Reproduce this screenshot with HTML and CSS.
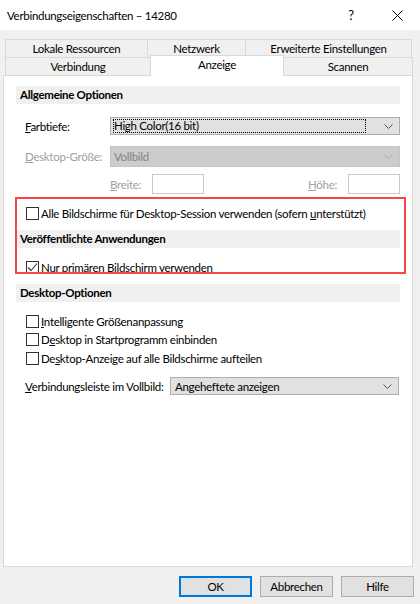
FILE: index.html
```html
<!DOCTYPE html>
<html lang="de">
<head>
<meta charset="utf-8">
<title>Verbindungseigenschaften</title>
<link rel="stylesheet" href="styles.css">
</head>
<body>
<div class="titlebar">
  <span class="title">Verbindungseigenschaften – 14280</span>
  <span class="help">?</span>
  <span class="close"><svg width="11" height="11" viewBox="0 0 11 11"><path d="M0.5 0.5 L10.5 10.5 M10.5 0.5 L0.5 10.5" stroke="#000" stroke-width="1" fill="none"/></svg></span>
</div>

<div class="tabs">
  <div class="tabrow">
    <div class="tab w-lokal">Lokale Ressourcen</div>
    <div class="tab w-netz">Netzwerk</div>
    <div class="tab w-erw">Erweiterte Einstellungen</div>
  </div>
  <div class="tabrow">
    <div class="tab w-verb">Verbindung</div>
    <div class="tab active w-anz">Anzeige</div>
    <div class="tab w-scan">Scannen</div>
  </div>
</div>

<div class="panel">
  <div class="band">Allgemeine Optionen</div>

  <div class="formrow r-farb">
    <span class="lbl"><u>F</u>arbtiefe:</span>
    <div class="select s-farb"><span class="focus">High Color(16 bit)</span><span class="chev"><svg width="9" height="5" viewBox="0 0 9 5"><path d="M0.5 0.5 L4.5 4.5 L8.5 0.5" stroke="#555" fill="none"/></svg></span></div>
  </div>

  <div class="formrow r-size">
    <span class="lbl dis"><u>D</u>esktop-Größe:</span>
    <div class="select disabled s-size"><span class="val">Vollbild</span><span class="chev"><svg width="9" height="5" viewBox="0 0 9 5"><path d="M0.5 0.5 L4.5 4.5 L8.5 0.5" stroke="#aaa" fill="none"/></svg></span></div>
  </div>

  <div class="formrow r-dim">
    <span class="lbl dis l-breite"><u>B</u>reite:</span>
    <span class="input"></span>
    <span class="lbl dis l-hoehe"><u>H</u>öhe:</span>
    <span class="input"></span>
  </div>

  <div class="check r-alle"><span class="box"></span><span>Alle Bildschirme für Desktop-Session verwenden (sofern <u>u</u>nterstützt)</span></div>

  <div class="band b-veroff">Veröffentlichte Anwendungen</div>

  <div class="check r-nur"><span class="box"><svg width="11" height="11" viewBox="0 0 11 11"><path d="M1 5.5 L4 8.5 L10 1.5" stroke="#333" stroke-width="1.1" fill="none"/></svg></span><span><u>N</u>ur primären Bildschirm verwenden</span></div>

  <div class="band b-desk">Desktop-Optionen</div>

  <div class="check r-int"><span class="box"></span><span><u>I</u>ntelligente Größenanpassung</span></div>
  <div class="check r-start"><span class="box"></span><span>D<u>e</u>sktop in Startprogramm einbinden</span></div>
  <div class="check r-auf"><span class="box"></span><span>De<u>s</u>ktop-Anzeige auf alle Bildschirme aufteilen</span></div>

  <div class="formrow r-leiste">
    <span class="lbl"><u>V</u>erbindungsleiste im Vollbild:</span>
    <div class="select s-leiste"><span class="val">Angeheftete anzeigen</span><span class="chev"><svg width="9" height="5" viewBox="0 0 9 5"><path d="M0.5 0.5 L4.5 4.5 L8.5 0.5" stroke="#555" fill="none"/></svg></span></div>
  </div>

  <div class="highlight"></div>
</div>

<div class="buttons">
  <div class="btn default">OK</div>
  <div class="btn">Abbrechen</div>
  <div class="btn">Hilfe</div>
</div>
</body>
</html>
```

FILE: styles.css
```css
* { box-sizing: border-box; }
html, body { margin: 0; padding: 0; }
body {
  width: 420px;
  height: 604px;
  background: #f0f0f0;
  font-family: Lato, "Noto Sans", sans-serif;
  font-size: 11.5px;
  letter-spacing: -0.3px;
  color: #000;
  overflow: hidden;
  white-space: nowrap;
}
u { text-decoration: underline; text-underline-offset: 1px; }

.titlebar {
  height: 30px;
  background: #fff;
  display: flex;
  align-items: center;
  padding-left: 7px;
}
.title { font-size: 11.5px; flex: 1; }
.help { width: 10px; text-align: center; margin-right: 36px; font-size: 13px; }
.close { width: 11px; height: 11px; margin-right: 17px; display: flex; }

.tabs { margin-top: 9px; padding-left: 5px; }
.tabrow { display: flex; height: 18px; }
.tab {
  height: 18px;
  border: 1px solid #d9d9d9;
  border-bottom: none;
  background: #f0f0f0;
  text-align: center;
  line-height: 17px;
  margin-left: -1px;
}
.tab:first-child { margin-left: 0; }
.w-lokal { width: 143px; }
.w-netz { width: 99px; }
.w-erw { width: 167px; }
.w-verb { width: 146px; }
.w-anz { width: 134px; }
.w-scan { width: 130px; }
.tabrow + .tabrow .tab { line-height: 18px; }
.tab.active {
  background: #fff;
  height: 21px;
  margin-top: -2px;
  line-height: 17px;
  position: relative;
  z-index: 1;
}

.panel {
  position: relative;
  margin-left: 3px;
  width: 410px;
  height: 492px;
  background: #fff;
  border: 1px solid #d9d9d9;
  padding: 10px 12px 0 12px;
}

.band {
  height: 18px;
  background: #f0f0f0;
  font-weight: bold;
  line-height: 18px;
  padding-left: 4px;
}

.formrow { display: flex; align-items: center; padding-left: 9px; }
.lbl { display: block; }
.lbl.dis { color: #a0a0a0; }
.r-farb { margin-top: 13px; height: 18px; }
.r-size { margin-top: 11px; height: 21px; }
.r-farb .lbl, .r-size .lbl { width: 85px; }

.select {
  height: 100%;
  flex: 1;
  background: #e1e1e1;
  border: 1px solid #adadad;
  display: flex;
  align-items: center;
  padding-left: 2px;
  position: relative;
}
.select .focus {
  flex: 1;
  height: 14px;
  line-height: 12px;
  border: 1px dotted #000;
  margin-right: 18px;
  padding-left: 0;
}
.select .val { flex: 1; padding-left: 1px; }
.select .chev { width: 9px; height: 5px; display: flex; margin-right: 6px; }
.select.disabled { background: #cccccc; border-color: #c4c4c4; color: #838383; }

.r-dim { margin-top: 7px; height: 20px; padding-left: 94px; }
.l-breite { width: 42px; }
.l-hoehe { margin-left: 104px; width: 40px; }
.input {
  display: block;
  width: 52px;
  height: 20px;
  border: 1px solid #c8c8c8;
  background: #fff;
}

.check {
  display: flex;
  align-items: center;
  height: 18px;
  padding-left: 10px;
}
.box {
  width: 13px;
  height: 13px;
  border: 1px solid #333;
  background: #fff;
  margin-right: 2px;
  display: flex;
  align-items: center;
  justify-content: center;
  flex: none;
}
.r-alle { margin-top: 10px; }
.b-veroff { margin-top: 8px; }
.r-nur { margin-top: 10px; }
.b-desk { margin-top: 8px; }
.r-int { margin-top: 10px; }
.r-auf { margin-top: 1px; }

.r-leiste { margin-top: 10px; height: 18px; }
.r-leiste .lbl { width: 145px; }
.s-leiste { margin-right: 1px; }
.s-leiste .val { padding-left: 2px; }

.highlight {
  position: absolute;
  left: 11px;
  top: 121px;
  width: 391px;
  height: 77px;
  border: 2px solid #f94449;
  pointer-events: none;
}

.buttons {
  display: flex;
  justify-content: flex-end;
  gap: 8px;
  padding-right: 6px;
  margin-top: 9px;
}
.btn {
  width: 73px;
  height: 21px;
  background: #e1e1e1;
  border: 1px solid #adadad;
  text-align: center;
  line-height: 19px;
}
.btn.default { border: 2px solid #0078d7; line-height: 17px; }
```
